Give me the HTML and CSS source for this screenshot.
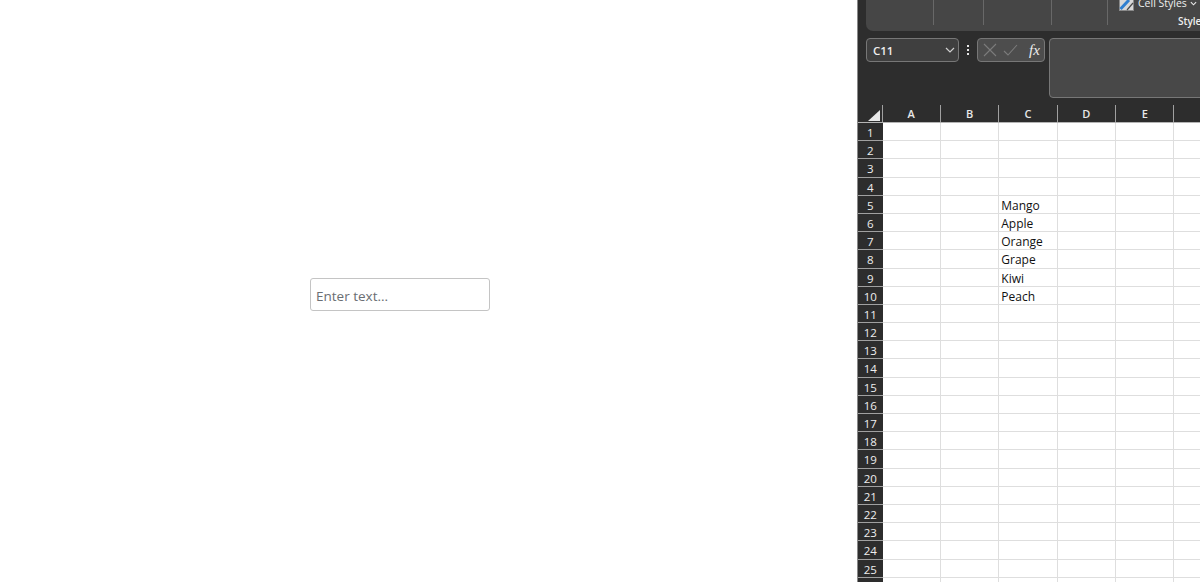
FILE: index.html
```html
<!DOCTYPE html>
<html lang="en">
<head>
  <meta charset="UTF-8">
  <title>Enter text</title>
  <link rel="stylesheet" href="styles.css">
</head>
<body>

  <!-- Text box on the left -->
  <main class="canvas">
    <input class="text-input" type="text" placeholder="Enter text...">
  </main>

  <!-- Excel window on the right -->
  <section class="excel">
    <div class="ribbon">
      <div class="group g1"></div>
      <div class="group g2"></div>
      <div class="group g3"></div>
      <div class="group g4"></div>
      <div class="group styles">
        <div class="cell-styles">
          <svg class="cs-icon" viewBox="0 0 15 13" width="15" height="13">
            <rect x="0.5" y="0.5" width="14" height="12" fill="#d8d8d8" stroke="#8a8a8a"/>
            <path d="M8 12 L14 5" stroke="#4a4a4a" stroke-width="1.2"/>
            <path d="M1.5 11 L10 2" stroke="#2f7fd0" stroke-width="3"/>
          </svg>
          <span>Cell Styles</span>
          <svg class="chevron" viewBox="0 0 8 5" width="7" height="5">
            <path d="M1 1 L4 4 L7 1" fill="none" stroke="#e6e6e6" stroke-width="1.3"/>
          </svg>
        </div>
        <div class="group-label">Styles</div>
      </div>
    </div>

    <div class="formula-row">
      <div class="name-box">
        <span>C11</span>
        <svg viewBox="0 0 10 6" width="10" height="6">
          <path d="M1 1 L5 5 L9 1" fill="none" stroke="#cfcfcf" stroke-width="1.2"/>
        </svg>
      </div>
      <div class="dots"><i></i><i></i><i></i></div>
      <div class="fx-box">
        <svg viewBox="0 0 14 14" width="14" height="14">
          <path d="M1 1 L13 13 M13 1 L1 13" fill="none" stroke="#7c7c7c" stroke-width="1.1"/>
        </svg>
        <svg viewBox="0 0 15 12" width="15" height="12">
          <path d="M1 7 L5 11 L14 1" fill="none" stroke="#7c7c7c" stroke-width="1.1"/>
        </svg>
        <span class="fx">fx</span>
      </div>
      <div class="formula-bar"></div>
    </div>

    <div class="col-heads">
      <div class="corner"><div class="triangle"></div></div>
      <div class="col-head">A</div>
      <div class="col-head">B</div>
      <div class="col-head">C</div>
      <div class="col-head">D</div>
      <div class="col-head">E</div>
    </div>

    <div class="sheet">
      <div class="row"><div class="num">1</div><div class="cell"></div><div class="cell"></div><div class="cell"></div><div class="cell"></div><div class="cell"></div></div>
      <div class="row"><div class="num">2</div><div class="cell"></div><div class="cell"></div><div class="cell"></div><div class="cell"></div><div class="cell"></div></div>
      <div class="row"><div class="num">3</div><div class="cell"></div><div class="cell"></div><div class="cell"></div><div class="cell"></div><div class="cell"></div></div>
      <div class="row"><div class="num">4</div><div class="cell"></div><div class="cell"></div><div class="cell"></div><div class="cell"></div><div class="cell"></div></div>
      <div class="row"><div class="num">5</div><div class="cell"></div><div class="cell"></div><div class="cell">Mango</div><div class="cell"></div><div class="cell"></div></div>
      <div class="row"><div class="num">6</div><div class="cell"></div><div class="cell"></div><div class="cell">Apple</div><div class="cell"></div><div class="cell"></div></div>
      <div class="row"><div class="num">7</div><div class="cell"></div><div class="cell"></div><div class="cell">Orange</div><div class="cell"></div><div class="cell"></div></div>
      <div class="row"><div class="num">8</div><div class="cell"></div><div class="cell"></div><div class="cell">Grape</div><div class="cell"></div><div class="cell"></div></div>
      <div class="row"><div class="num">9</div><div class="cell"></div><div class="cell"></div><div class="cell">Kiwi</div><div class="cell"></div><div class="cell"></div></div>
      <div class="row"><div class="num">10</div><div class="cell"></div><div class="cell"></div><div class="cell">Peach</div><div class="cell"></div><div class="cell"></div></div>
      <div class="row"><div class="num">11</div><div class="cell"></div><div class="cell"></div><div class="cell"></div><div class="cell"></div><div class="cell"></div></div>
      <div class="row"><div class="num">12</div><div class="cell"></div><div class="cell"></div><div class="cell"></div><div class="cell"></div><div class="cell"></div></div>
      <div class="row"><div class="num">13</div><div class="cell"></div><div class="cell"></div><div class="cell"></div><div class="cell"></div><div class="cell"></div></div>
      <div class="row"><div class="num">14</div><div class="cell"></div><div class="cell"></div><div class="cell"></div><div class="cell"></div><div class="cell"></div></div>
      <div class="row"><div class="num">15</div><div class="cell"></div><div class="cell"></div><div class="cell"></div><div class="cell"></div><div class="cell"></div></div>
      <div class="row"><div class="num">16</div><div class="cell"></div><div class="cell"></div><div class="cell"></div><div class="cell"></div><div class="cell"></div></div>
      <div class="row"><div class="num">17</div><div class="cell"></div><div class="cell"></div><div class="cell"></div><div class="cell"></div><div class="cell"></div></div>
      <div class="row"><div class="num">18</div><div class="cell"></div><div class="cell"></div><div class="cell"></div><div class="cell"></div><div class="cell"></div></div>
      <div class="row"><div class="num">19</div><div class="cell"></div><div class="cell"></div><div class="cell"></div><div class="cell"></div><div class="cell"></div></div>
      <div class="row"><div class="num">20</div><div class="cell"></div><div class="cell"></div><div class="cell"></div><div class="cell"></div><div class="cell"></div></div>
      <div class="row"><div class="num">21</div><div class="cell"></div><div class="cell"></div><div class="cell"></div><div class="cell"></div><div class="cell"></div></div>
      <div class="row"><div class="num">22</div><div class="cell"></div><div class="cell"></div><div class="cell"></div><div class="cell"></div><div class="cell"></div></div>
      <div class="row"><div class="num">23</div><div class="cell"></div><div class="cell"></div><div class="cell"></div><div class="cell"></div><div class="cell"></div></div>
      <div class="row"><div class="num">24</div><div class="cell"></div><div class="cell"></div><div class="cell"></div><div class="cell"></div><div class="cell"></div></div>
      <div class="row"><div class="num">25</div><div class="cell"></div><div class="cell"></div><div class="cell"></div><div class="cell"></div><div class="cell"></div></div>
      <div class="row"><div class="num"></div><div class="cell"></div><div class="cell"></div><div class="cell"></div><div class="cell"></div><div class="cell"></div></div>
    </div>
  </section>

</body>
</html>
```

FILE: styles.css
```css
html, body {
  height: 100%;
}

body {
  margin: 0;
  display: flex;
  justify-content: space-between;
  overflow: hidden;
  background: #fff;
  font-family: "Open Sans", sans-serif;
}

/* Text box */
.canvas {
  width: 800px;
  padding-top: 7px;
  display: flex;
  align-items: center;
  justify-content: center;
  box-sizing: border-box;
}

.text-input {
  width: 180px;
  height: 33px;
  box-sizing: border-box;
  padding: 2px 5px 0;
  border: 1px solid #c4c4c4;
  border-radius: 3px;
  outline: none;
  font-family: "Open Sans", sans-serif;
  font-size: 13.5px;
  color: #333;
}

.text-input::placeholder {
  color: #6a6e73;
  opacity: 1;
}

/* Excel window */
.excel {
  width: 343px;
  height: 100%;
  box-sizing: border-box;
  display: flex;
  flex-direction: column;
  overflow: hidden;
  background: #2d2d2d;
  border-left: 1px solid #8a8a8a;
}

.ribbon {
  height: 31px;
  margin: 0 -20px 0 8px;
  flex-shrink: 0;
  display: flex;
  background: #464646;
  border-radius: 0 0 7px 7px;
}

.group {
  height: 25px;
  box-sizing: border-box;
  border-right: 1px solid #686868;
}

.g1 { width: 68px; }
.g2 { width: 50px; }
.g3 { width: 68px; }
.g4 { width: 56px; }

.group.styles {
  border: 0;
  flex: 1;
}

.cell-styles {
  margin: -5px 0 0 11px;
  display: flex;
  align-items: center;
  height: 16px;
  font-size: 10.5px;
  color: #eee;
}

.cs-icon {
  margin: 2px 4px 0 0;
  flex-shrink: 0;
}

.chevron {
  margin-left: 3px;
}

.group-label {
  margin: 3px 0 0 70px;
  font-size: 10px;
  font-weight: 600;
  color: #eee;
}

/* Name box and formula bar */
.formula-row {
  height: 60px;
  margin: 7px 0 7px 8px;
  flex-shrink: 0;
  display: flex;
  align-items: flex-start;
}

.name-box,
.fx-box {
  height: 24px;
  box-sizing: border-box;
  display: flex;
  align-items: center;
  border: 1px solid #777;
  border-radius: 4px;
  background: #3f3f3f;
}

.name-box {
  width: 93px;
  padding: 0 3px 0 6px;
  justify-content: space-between;
  font-size: 11.5px;
  font-weight: 600;
  color: #eee;
}

.dots {
  width: 18px;
  height: 24px;
  display: flex;
  flex-direction: column;
  align-items: center;
  justify-content: center;
  gap: 2px;
}

.dots i {
  width: 2px;
  height: 2px;
  background: #e6e6e6;
}

.fx-box {
  width: 68px;
  padding: 0 4px 0 5px;
  gap: 6px;
  background: #4d4d4d;
}

.fx {
  margin-left: 5px;
  font-family: "Liberation Serif", serif;
  font-style: italic;
  font-size: 15px;
  color: #eee;
}

.formula-bar {
  flex: 1;
  height: 60px;
  margin: 0 -10px 0 4px;
  box-sizing: border-box;
  border: 1px solid #777;
  border-radius: 4px;
  background: #484848;
}

/* Column headers */
.col-heads {
  height: 18px;
  flex-shrink: 0;
  display: flex;
  box-sizing: border-box;
  border-bottom: 1px solid #b4b4b4;
}

.corner {
  width: 24.5px;
  height: 17px;
  flex-shrink: 0;
  box-sizing: border-box;
  padding: 5px 0 0 10px;
  border-right: 1px solid #a0a0a0;
}

.triangle {
  width: 0;
  height: 0;
  border-left: 12px solid transparent;
  border-bottom: 11px solid #e8e8e8;
}

.col-head {
  width: 58.4px;
  flex-shrink: 0;
  box-sizing: border-box;
  border-right: 1px solid #a0a0a0;
  text-align: center;
  font-size: 11px;
  font-weight: 600;
  line-height: 17px;
  color: #e8e8e8;
}

/* Grid */
.sheet {
  flex: 1;
  overflow: hidden;
  background: #fff;
}

.row {
  height: 18.2px;
  display: flex;
  box-sizing: border-box;
}

.row::after {
  content: "";
  flex: 1;
  border-bottom: 1px solid #dedede;
}

.num {
  width: 24.5px;
  flex-shrink: 0;
  box-sizing: border-box;
  padding-top: 1px;
  border-bottom: 1px solid #a0a0a0;
  background: #2d2d2d;
  text-align: center;
  font-size: 11.5px;
  line-height: 18px;
  color: #eee;
}

.cell {
  width: 58.4px;
  flex-shrink: 0;
  box-sizing: border-box;
  padding: 2px 0 0 2px;
  border-right: 1px solid #dedede;
  border-bottom: 1px solid #dedede;
  font-size: 12px;
  line-height: 16px;
  color: #111;
  white-space: nowrap;
}
```
